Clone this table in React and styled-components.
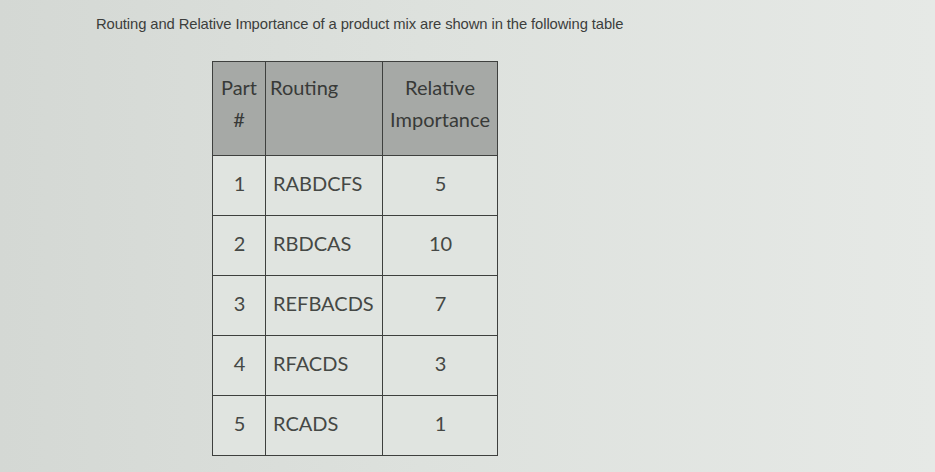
import React from 'react'
import styled, { createGlobalStyle } from 'styled-components'

const GlobalStyle = createGlobalStyle`
    html, body {
        margin: 0;
        padding: 0;
    }
    body {
        width: 935px;
        height: 472px;
        overflow: hidden;
        background: linear-gradient(90deg, #d4d8d4 0%, #dde1dd 45%, #e6e9e6 100%);
    }
`;

const rows = [
    { part: 1, routing: 'RABDCFS', importance: 5 },
    { part: 2, routing: 'RBDCAS', importance: 10 },
    { part: 3, routing: 'REFBACDS', importance: 7 },
    { part: 4, routing: 'RFACDS', importance: 3 },
    { part: 5, routing: 'RCADS', importance: 1 },
];

function App() {
    return (
        <Page>
            <GlobalStyle />
            <Question>
                Routing and Relative Importance of a product mix are shown in the following table
            </Question>
            <Table>
                <colgroup>
                    <col style={{ width: 53 }} />
                    <col style={{ width: 117 }} />
                    <col style={{ width: 115 }} />
                </colgroup>
                <thead>
                    <tr>
                        <HeadCell $align="center">Part<br />#</HeadCell>
                        <HeadCell $align="left">Routing</HeadCell>
                        <HeadCell $align="center">Relative<br />Importance</HeadCell>
                    </tr>
                </thead>
                <tbody>
                    {rows.map(r => (
                        <BodyRow key={r.part}>
                            <Cell $align="center">{r.part}</Cell>
                            <Cell $align="left">{r.routing}</Cell>
                            <Cell $align="center">{r.importance}</Cell>
                        </BodyRow>
                    ))}
                </tbody>
            </Table>
        </Page>
    )
}

const Page = styled.div`
    padding: 15px 0 0 96px;
    box-sizing: border-box;
    height: 472px;
`;

const Question = styled.p`
    margin: 0;
    font-family: "Liberation Sans", Arial, sans-serif;
    font-size: 14.8px;
    line-height: 18px;
    color: #3c3e3c;
    letter-spacing: -0.1px;
`;

const Table = styled.table`
    margin: 28px 0 0 116px;
    border-collapse: collapse;
    table-layout: fixed;
    width: 285px;
    font-family: Lato, "Noto Sans", sans-serif;
    font-size: 20px;
    color: #454845;
    border: 1.5px solid #3e403e;
`;

const HeadCell = styled.th`
    background: #a6a9a6;
    height: 94px;
    box-sizing: border-box;
    padding: 9px 4px 0;
    vertical-align: top;
    text-align: ${p => p.$align};
    font-weight: 400;
    line-height: 32px;
    color: #383a38;
    border: 1.5px solid #3e403e;
    white-space: nowrap;
`;

const BodyRow = styled.tr`
    height: 60px;
`;

const Cell = styled.td`
    background: #e0e4e0;
    text-align: ${p => p.$align};
    padding: 0 6px 6px 7px;
    vertical-align: middle;
    border: 1.5px solid #3e403e;
    white-space: nowrap;
`;

export default App;
